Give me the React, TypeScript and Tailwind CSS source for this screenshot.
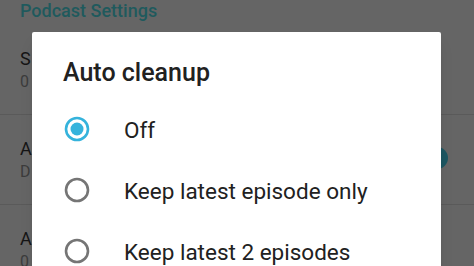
import React from "react";

const options = ["Off", "Keep latest episode only", "Keep latest 2 episodes"];

const Radio = ({ checked }: { checked: boolean }) => (
  <svg width="26" height="26" viewBox="0 0 26 26" className="shrink-0">
    <circle
      cx="13"
      cy="13"
      r="11"
      fill="none"
      stroke={checked ? "#35b3dc" : "#757575"}
      strokeWidth="2.6"
    />
    {checked && <circle cx="13" cy="13" r="6.5" fill="#35b3dc" />}
  </svg>
);

export default function App() {
  return (
    <div
      className="relative w-[474px] h-[266px] overflow-hidden bg-[#656565]"
      style={{ fontFamily: "Roboto, 'Noto Sans', sans-serif" }}
    >
      {/* dimmed settings screen */}
      <div className="flex flex-col">
        <div className="h-[25px] pl-5 text-[18px] leading-[22px] font-medium text-[#1f5a5d]">
          Podcast Settings
        </div>
        <div className="h-[90px] pl-5 pt-[22px] border-b border-[#5a5a5a] flex flex-col">
          <span className="text-[18px] leading-[24px] text-[#151515]">S</span>
          <span className="text-[16px] leading-[22px] text-[#3c3c3c]">0</span>
        </div>
        <div className="relative h-[90px] pl-5 pt-[22px] border-b border-[#5a5a5a] flex flex-col">
          <span className="text-[18px] leading-[24px] text-[#151515]">A</span>
          <span className="text-[16px] leading-[22px] text-[#3c3c3c]">D</span>
          <div className="absolute left-[426px] top-[32px] w-[22px] h-[22px] rounded-full bg-[#1c5661]" />
        </div>
        <div className="h-[90px] pl-5 pt-[22px] flex flex-col">
          <span className="text-[18px] leading-[24px] text-[#151515]">A</span>
          <span className="text-[16px] leading-[22px] text-[#3c3c3c]">0</span>
        </div>
      </div>

      {/* dialog */}
      <div className="absolute left-[32px] top-[32px] w-[409px] h-[260px] bg-white rounded-[2px] shadow-lg">
        <div className="pl-[31px] pt-[26px] text-[25px] leading-[30px] font-medium text-[#212121]">
          Auto cleanup
        </div>
        <div className="mt-[10px] flex flex-col">
          {options.map((o, i) => (
            <div key={o} className="h-[61px] pl-[32px] flex items-center gap-[34px]">
              <Radio checked={i === 0} />
              <span className="pt-[3px] text-[22.5px] leading-[28px] text-[#212121]">{o}</span>
            </div>
          ))}
        </div>
      </div>
    </div>
  );
}
